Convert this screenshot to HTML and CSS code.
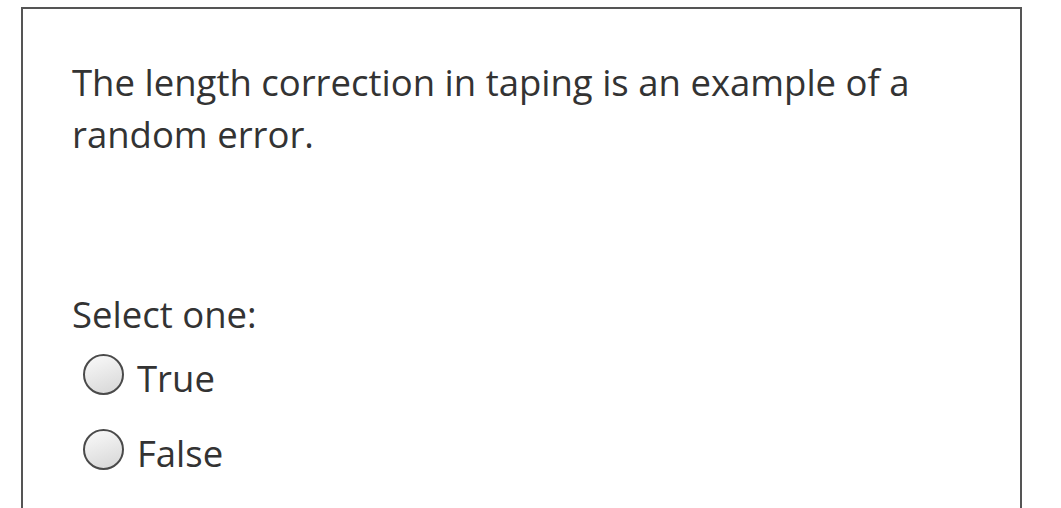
FILE: index.html
```html
<!DOCTYPE html>
<html lang="en">
<head>
  <meta charset="UTF-8" />
  <title>Question</title>
  <link rel="stylesheet" href="styles.css">
</head>
<body>
  <div class="question">
    <p class="qtext">The length correction in taping is an example of a random error.</p>

    <div class="prompt">Select one:</div>
    <div class="answers">
      <label class="option">
        <span class="radio"></span>
        <span>True</span>
      </label>
      <label class="option">
        <span class="radio"></span>
        <span>False</span>
      </label>
    </div>
  </div>
</body>
</html>
```
FILE: styles.css
```css
body {
  margin: 0;
  background: #fff;
  color: #333;
  font-family: 'Open Sans', sans-serif;
  font-size: 36.5px;
  line-height: 52px;
  overflow: hidden;
}

.question {
  margin: 7px 0 0 21px;
  width: 1001px;
  height: 520px;
  box-sizing: border-box;
  border: 2px solid #555;
  border-bottom: none;
  padding: 47px 48px 0 49px;
}

.qtext {
  margin: 0;
  width: 870px;
}

.prompt {
  margin-top: 128px;
}

.option {
  display: flex;
  align-items: center;
  gap: 13px;
  height: 75px;
  padding-left: 11px;
}

.radio {
  width: 37px;
  height: 37px;
  margin-bottom: 7px;
  border: 2px solid #4a4a4a;
  border-radius: 50%;
  background: linear-gradient(160deg, #fafafa, #d6d6d6);
}
```
